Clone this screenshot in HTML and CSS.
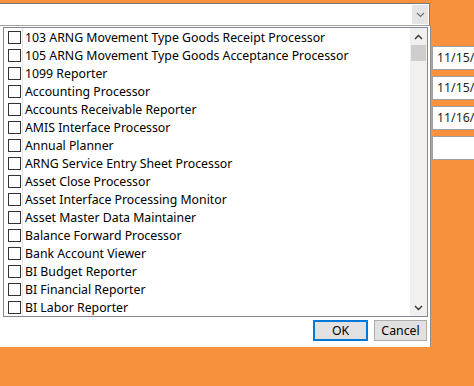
FILE: index.html
```html
<!DOCTYPE html>
<html lang="en">
<head>
    <meta charset="UTF-8">
    <meta name="viewport" content="width=device-width, initial-scale=1.0">
    <link rel="stylesheet" href="styles.css">
    <title>Role Picker</title>
</head>
<body>

<div class="page">
    <div class="picker">
        <div class="combo">
            <div class="combo-value"></div>
            <div class="combo-btn">
                <svg width="9" height="6" viewBox="0 0 9 6"><path d="M1 1 L4.5 4.5 L8 1" fill="none" stroke="#707070" stroke-width="1.1"/></svg>
            </div>
        </div>
        <div class="dropdown">
            <div class="list">
                <div class="items" id="items"></div>
                <div class="scrollbar">
                    <div class="arrow">
                        <svg width="9" height="6" viewBox="0 0 9 6"><path d="M1 5 L4.5 1.5 L8 5" fill="none" stroke="#333" stroke-width="1.4"/></svg>
                    </div>
                    <div class="track">
                        <div class="thumb"></div>
                    </div>
                    <div class="arrow">
                        <svg width="9" height="6" viewBox="0 0 9 6"><path d="M1 1 L4.5 4.5 L8 1" fill="none" stroke="#333" stroke-width="1.4"/></svg>
                    </div>
                </div>
            </div>
            <div class="actions">
                <button class="btn btn-default">OK</button>
                <button class="btn">Cancel</button>
            </div>
        </div>
    </div>

    <div class="dates">
        <div class="date-box">11/15/2018</div>
        <div class="date-box">11/15/2018</div>
        <div class="date-box">11/16/2018</div>
        <div class="date-box"></div>
    </div>
</div>

<script>
    const names = [
        '103 ARNG Movement Type Goods Receipt Processor',
        '105 ARNG Movement Type Goods Acceptance Processor',
        '1099 Reporter',
        'Accounting Processor',
        'Accounts Receivable Reporter',
        'AMIS Interface Processor',
        'Annual Planner',
        'ARNG Service Entry Sheet Processor',
        'Asset Close Processor',
        'Asset Interface Processing Monitor',
        'Asset Master Data Maintainer',
        'Balance Forward Processor',
        'Bank Account Viewer',
        'BI Budget Reporter',
        'BI Financial Reporter',
        'BI Labor Reporter'
    ];

    const items = document.getElementById('items');
    names.forEach(name => {
        const row = document.createElement('div');
        row.className = 'row';

        const cell = document.createElement('div');
        cell.className = 'check-cell';
        const box = document.createElement('span');
        box.className = 'check';
        cell.appendChild(box);

        const label = document.createElement('div');
        label.className = 'label';
        label.textContent = name;

        row.appendChild(cell);
        row.appendChild(label);
        items.appendChild(row);
    });
</script>

</body>
</html>
```

FILE: styles.css
```css
* {
    box-sizing: border-box;
}

body {
    margin: 0;
    background: #f8913d;
    font-family: "Noto Sans", "Open Sans", sans-serif;
    font-size: 12px;
    color: #000;
    height: 386px;
    overflow: hidden;
}

.page {
    display: flex;
    align-items: flex-start;
    padding-top: 3px;
    width: 474px;
}

.picker {
    flex-shrink: 0;
    width: 432px;
    margin-left: -1px;
}

.combo {
    display: flex;
    height: 23px;
    border: 1px solid #7a7a7a;
    border-bottom-color: #a0a0a0;
    background: #fff;
    margin-right: 1px;
}

.combo-value {
    flex: 1;
}

.combo-btn {
    width: 16px;
    margin: 1px;
    background: #e5e5e5;
    display: flex;
    align-items: center;
    justify-content: center;
}

.dropdown {
    background: #fff;
    border-right: 1px solid #8e8e8e;
    padding: 1px 2px 6px 4px;
}

.list {
    display: flex;
    height: 290px;
    border: 1px solid #828790;
}

.items {
    flex: 1;
    overflow: hidden;
}

.row {
    display: flex;
    height: 18px;
    align-items: center;
}

.check-cell {
    flex-shrink: 0;
    width: 19px;
    height: 18px;
    border-right: 1px solid #e3e3e3;
    display: flex;
    align-items: center;
    padding-left: 4px;
}

.check {
    width: 13px;
    height: 13px;
    border: 1px solid #333;
    background: #fff;
}

.label {
    padding-left: 2px;
    white-space: nowrap;
    font-size: 12.3px;
}

.scrollbar {
    flex-shrink: 0;
    width: 17px;
    display: flex;
    flex-direction: column;
    background: #f0f0f0;
}

.arrow {
    height: 17px;
    display: flex;
    align-items: center;
    justify-content: center;
    background: #f0f0f0;
}

.track {
    flex: 1;
}

.thumb {
    height: 16px;
    margin: 0 1px;
    background: #cdcdcd;
}

.actions {
    display: flex;
    justify-content: flex-end;
    gap: 6px;
    margin-top: 3px;
    padding-right: 1px;
}

.btn {
    font-family: inherit;
    font-size: 12.3px;
    height: 21px;
    padding: 0;
    width: 53px;
    background: #e1e1e1;
    border: 1px solid #adadad;
    color: #000;
}

.btn-default {
    width: 55px;
    border: 2px solid #0078d7;
}

.dates {
    flex: 1;
    min-width: 0;
    display: flex;
    flex-direction: column;
    gap: 6px;
    margin-top: 43px;
    margin-left: 1px;
}

.date-box {
    height: 24px;
    line-height: 22px;
    border: 1px solid #a0a0a0;
    border-right: none;
    background: #fff;
    padding-left: 4px;
    font-size: 12.3px;
    color: #222;
    white-space: nowrap;
    overflow: hidden;
}
```
